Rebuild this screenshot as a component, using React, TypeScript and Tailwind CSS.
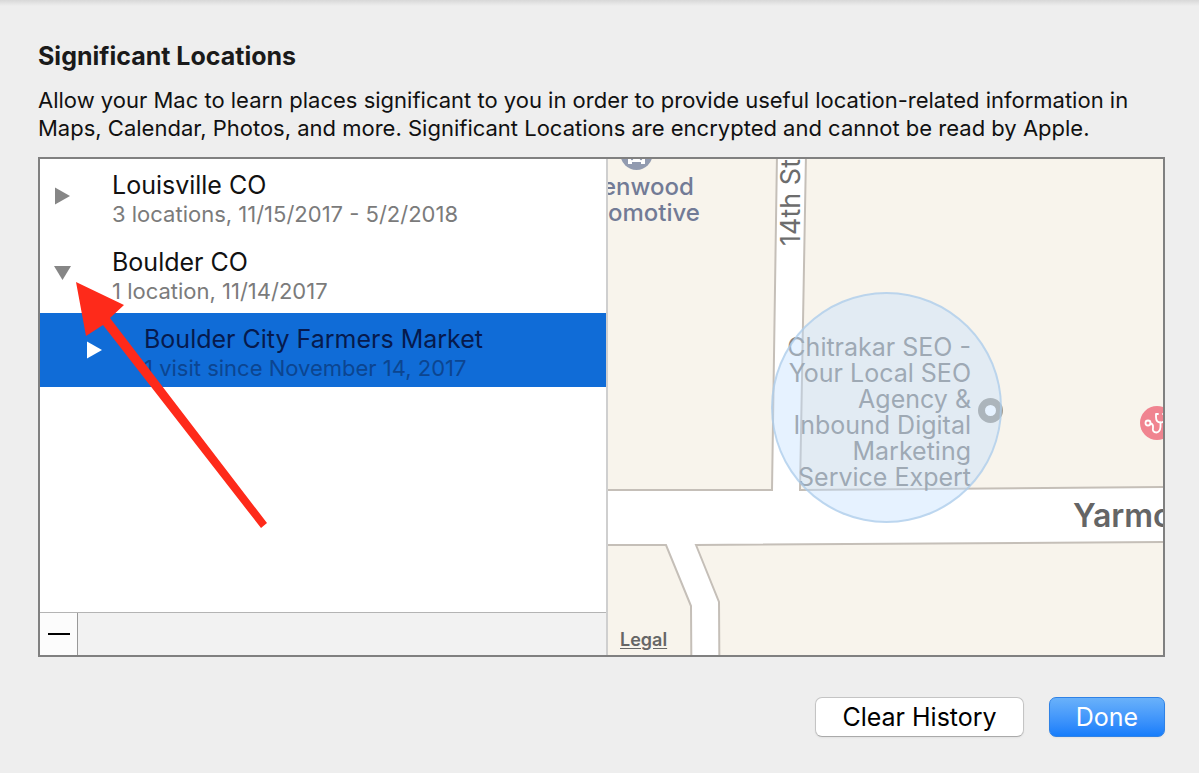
type Place = {
  title: string;
  detail: string;
  open?: boolean;
  nested?: boolean;
};

const places: Place[] = [
  { title: "Louisville CO", detail: "3 locations, 11/15/2017 - 5/2/2018" },
  { title: "Boulder CO", detail: "1 location, 11/14/2017", open: true },
  {
    title: "Boulder City Farmers Market",
    detail: "1 visit since November 14, 2017",
    nested: true,
  },
];

function Disclosure({ open, light }: { open?: boolean; light?: boolean }) {
  return (
    <svg
      width="18"
      height="18"
      viewBox="0 0 18 18"
      className={light ? "fill-white" : "fill-[#868686]"}
      aria-hidden="true"
    >
      <path d={open ? "M0 2h17L8.500 16z" : "M1 0.500v17L16 9z"} />
    </svg>
  );
}

function PlaceRow({ place }: { place: Place }) {
  const { title, detail, open, nested } = place;
  return (
    <li
      className={
        nested
          ? "flex items-center bg-[#106cd7] pl-[46px]"
          : "flex items-center pl-[14px]"
      }
    >
      <button
        type="button"
        aria-label={`Toggle ${title}`}
        aria-expanded={Boolean(open)}
        className="w-[58px] shrink-0"
      >
        <Disclosure open={open} light={nested} />
      </button>
      <div className="min-w-0 pt-[11px] pb-[5px]">
        <p
          className={
            nested
              ? "text-[25px] leading-[30px] text-[#061a4d]"
              : "text-[25px] leading-[30px] text-[#111]"
          }
        >
          {title}
        </p>
        <p
          className={
            nested
              ? "text-[22px] leading-[28px] text-[#0c4590]"
              : "text-[22px] leading-[28px] text-[#7b7b7b]"
          }
        >
          {detail}
        </p>
      </div>
    </li>
  );
}

function PlaceList() {
  return (
    <section className="relative flex min-w-0 flex-col border-r-2 border-[#cfcfcf] bg-white">
      <ul className="flex flex-1 flex-col gap-[3px]">
        {places.map((place) => (
          <PlaceRow key={place.title} place={place} />
        ))}
      </ul>
      <div className="flex h-[43px] border-t border-[#b4b4b4] bg-[#f2f2f2]">
        <button
          type="button"
          aria-label="Remove location"
          className="flex w-[38px] items-center justify-center border-r border-[#999] bg-[#fcfcfc]"
        >
          <span className="h-[2px] w-[22px] bg-black" />
        </button>
      </div>
      <svg
        width="192"
        height="248"
        className="pointer-events-none absolute top-[122px] left-[36px] fill-[#fe2a1a]"
        aria-hidden="true"
      >
        <path d="M0 1L48 24L34 37L191 242L185 247L27 44L10 55Z" />
      </svg>
    </section>
  );
}

function LocationMap() {
  return (
    <section
      aria-label="Map"
      className="relative min-w-0 overflow-hidden bg-white"
    >
      <svg
        width="100%"
        height="100%"
        className="absolute inset-0"
        aria-hidden="true"
      >
        <g fill="#f8f4ec" stroke="#c5bfb8" strokeWidth="2">
          <path d="M-5 -5H169L164 331H-5Z" />
          <path d="M198 -5H2000V318L556 328L192 331Z" />
          <path d="M-5 386H58L83 447L84 600H-5Z" />
          <path d="M88 386L111 443L112 600H2000V370L556 383Z" />
        </g>
        <circle cx="28.500" cy="-5" r="16" fill="#929bb0" />
        <path d="M20 -6H37V5H33V3H24V5H20Z" fill="#fff" />
        <circle cx="24" cy="0" r="1.200" fill="#929bb0" />
        <circle cx="33" cy="0" r="1.200" fill="#929bb0" />
      </svg>

      <p className="absolute top-[15px] -left-[6px] text-[24px] leading-[26px] font-medium whitespace-nowrap text-[#727b96]">
        enwood
        <br />
        <span className="pl-[6px]">omotive</span>
      </p>

      <p className="absolute top-0 left-[168px] rotate-180 text-[27px] leading-[30px] whitespace-nowrap text-[#6d6d6d] [writing-mode:vertical-rl]">
        14th St
      </p>

      <p className="absolute top-[175px] left-[163px] w-[200px] text-right text-[25px] leading-[26px] whitespace-nowrap text-[#888583]">
        Chitrakar SEO -<br />
        Your Local SEO
        <br />
        Agency &amp;
        <br />
        Inbound Digital
        <br />
        Marketing
        <br />
        Service Expert
      </p>
      <span className="absolute top-[239px] left-[370px] size-[25px] rounded-full border-[7px] border-[#9f9a8f] bg-white" />
      <span className="absolute top-[133px] left-[163px] size-[231px] rounded-full border-2 border-[#a9cbe8]/70 bg-[#c0deff]/40" />

      <p className="absolute top-[338px] left-[465px] text-[32px] leading-[38px] font-semibold whitespace-nowrap text-[#656565]">
        Yarmouth
      </p>

      <svg
        width="34"
        height="34"
        viewBox="0 0 34 34"
        className="absolute top-[247px] left-[532px]"
        aria-hidden="true"
      >
        <circle cx="17" cy="17" r="17" fill="#f08490" />
        <g
          fill="none"
          stroke="#fff"
          strokeWidth="1.800"
          strokeLinecap="round"
          strokeLinejoin="round"
        >
          <circle cx="8" cy="17" r="2.500" />
          <path d="M18 8H16V11Q16 16.500 20.500 16.500T25 11V8H23" />
          <path d="M20.500 16.500V21Q20 26 16.500 26.500Q12 26 13 22Q13.500 18 10.500 17.500" />
        </g>
      </svg>

      <a
        href="#legal"
        className="absolute bottom-[3px] left-[12px] text-[18px] leading-[24px] font-semibold text-[#666] underline underline-offset-2"
      >
        Legal
      </a>
    </section>
  );
}

export default function App() {
  return (
    <main className="min-h-screen bg-[#eee] font-['Inter','Liberation_Sans',sans-serif] text-[#111]">
      <div className="h-[6px] bg-linear-to-b from-[#d8d8d8] to-[#eee]" />
      <div className="pt-[34px] pr-[34px] pb-9 pl-[38px]">
        <h1 className="text-[25px] leading-[32px] font-bold text-[#1a1a1a]">
          Significant Locations
        </h1>
        <p className="mt-[14px] text-[22px] leading-[28px]">
          Allow your Mac to learn places significant to you in order to provide
          useful location-related information in Maps, Calendar, Photos, and
          more. Significant Locations are encrypted and cannot be read by Apple.
        </p>

        <div className="mt-[15px] grid min-h-[500px] grid-cols-[568fr_555fr] border-2 border-[#808080]">
          <PlaceList />
          <LocationMap />
        </div>

        <div className="mt-[40px] flex justify-end gap-[25px]">
          <button
            type="button"
            className="h-[40px] w-[209px] rounded-[7px] border border-[#c4c4c4] border-b-[#aaa] bg-white text-[25px] leading-[30px] text-black shadow-xs"
          >
            Clear History
          </button>
          <button
            type="button"
            className="h-[40px] w-[116px] rounded-[7px] border border-[#2f82e6] bg-linear-to-b from-[#69b1fa] to-[#157dfb] text-[25px] leading-[30px] text-white shadow-xs"
          >
            Done
          </button>
        </div>
      </div>
    </main>
  );
}
